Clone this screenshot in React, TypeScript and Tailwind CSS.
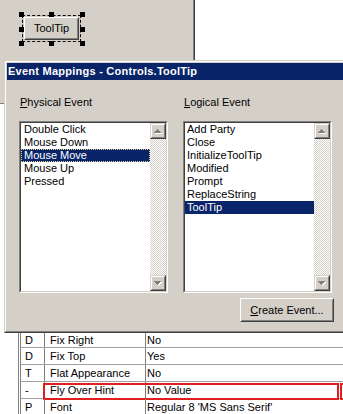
import React from "react";

function Tri({ dir }: { dir: "up" | "down" }) {
  const d =
    dir === "up"
      ? "M3 0H4V1H5V2H6V3H7V4H0V3H1V2H2V1H3Z"
      : "M0 0H7V1H6V2H5V3H4V4H3V3H2V2H1V1H0Z";
  return (
    <svg width="8" height="5" viewBox="0 0 8 5" className="block">
      <path d={d} transform="translate(1 1)" fill="#ffffff" />
      <path d={d} fill="#808080" />
    </svg>
  );
}

function ScrollBtn({ dir }: { dir: "up" | "down" }) {
  return (
    <div className="w-[16px] h-[16px] shrink-0 border border-t-[#d4d0c8] border-l-[#d4d0c8] border-r-[#404040] border-b-[#404040] bg-[#d4d0c8]">
      <div className="w-full h-full border border-t-white border-l-white border-r-[#808080] border-b-[#808080] flex items-center justify-center">
        <Tri dir={dir} />
      </div>
    </div>
  );
}

function ListBox({
  items,
  selected,
  focus,
  pad,
}: {
  items: string[];
  selected: number;
  focus?: boolean;
  pad: string;
}) {
  return (
    <div className="h-[172px] w-[149px] border border-t-[#808080] border-l-[#808080] border-r-white border-b-white">
      <div className="h-full border border-t-[#404040] border-l-[#404040] border-r-[#d4d0c8] border-b-[#d4d0c8] bg-white flex">
        <div className="flex-1 flex flex-col">
          {items.map((it, i) => (
            <div
              key={it}
              className={
                "h-[13px] leading-[13px] whitespace-nowrap " +
                pad +
                (i === selected ? " bg-[#0a246a] text-white" : " text-black") +
                (i === selected && focus
                  ? " outline-1 outline-dotted outline-[#e8d890] -outline-offset-1"
                  : "")
              }
            >
              {it}
            </div>
          ))}
        </div>
        <div className="w-[16px] flex flex-col">
          <ScrollBtn dir="up" />
          <div className="flex-1 bg-[image:repeating-conic-gradient(#d4d0c8_0_25%,#ffffff_0_50%)] bg-[length:2px_2px]" />
          <ScrollBtn dir="down" />
        </div>
      </div>
    </div>
  );
}

function Dialog() {
  return (
    <div className="w-[352px] shrink-0 h-[273px] border border-t-[#d4d0c8] border-l-[#d4d0c8] border-b-[#404040] border-r-[#404040]">
      <div className="h-full border border-t-white border-l-white border-b-[#808080] border-r-[#808080] p-px flex flex-col">
        <div className="h-[17px] shrink-0 bg-[#0a246a] text-white font-bold tracking-[0.25px] flex items-center pl-[1px] whitespace-nowrap">
          Event Mappings - Controls.ToolTip
        </div>
        <div className="pl-[12px] pt-[16px]">
          <div className="flex gap-[15px]">
            <div className="w-[149px]">
              <div className="h-[13px] pl-[1px] whitespace-nowrap">
                <span className="underline">P</span>hysical Event
              </div>
              <div className="mt-[12px]">
                <ListBox
                  items={["Double Click", "Mouse Down", "Mouse Move", "Mouse Up", "Pressed"]}
                  selected={2}
                  focus
                  pad="pl-[3px]"
                />
              </div>
            </div>
            <div className="w-[149px]">
              <div className="h-[13px] pl-[1px] whitespace-nowrap">
                <span className="underline">L</span>ogical Event
              </div>
              <div className="mt-[12px]">
                <ListBox
                  items={[
                    "Add Party",
                    "Close",
                    "InitializeToolTip",
                    "Modified",
                    "Prompt",
                    "ReplaceString",
                    "ToolTip",
                  ]}
                  selected={6}
                  pad="pl-[2px]"
                />
              </div>
            </div>
          </div>
          <div className="mt-[5px] ml-[221px] w-[94px] h-[24px] border border-t-white border-l-white border-r-[#404040] border-b-[#404040]">
            <div className="w-full h-full border border-t-[#d4d0c8] border-l-[#d4d0c8] border-r-[#808080] border-b-[#808080] flex items-center justify-center whitespace-nowrap">
              <span className="underline">C</span>reate Event...
            </div>
          </div>
        </div>
      </div>
    </div>
  );
}

const rows = [
  { k: "D", n: "Fix Right", v: "No" },
  { k: "D", n: "Fix Top", v: "Yes" },
  { k: "T", n: "Flat Appearance", v: "No" },
  { k: "-", n: "Fly Over Hint", v: "No Value" },
  { k: "P", n: "Font", v: "Regular 8 'MS Sans Serif'" },
];

function Grid() {
  return (
    <div className="flex-1 bg-white flex overflow-hidden">
      <div className="w-[18px] shrink-0" />
      <div className="w-px bg-[#808080]" />
      <div className="w-px bg-white" />
      <div className="w-px bg-[#808080]" />
      <div className="flex-1 flex flex-col">
        {rows.map((r, i) => (
          <div
            key={r.n}
            className={
              "relative flex shrink-0 border-b border-[#a0a0a0] whitespace-nowrap " +
              (i === 0 ? "h-[15px]" : "h-[17px]")
            }
          >
            <div
              className={
                "w-[24px] shrink-0 border-r border-[#808080] pl-[4px] " +
                (i === 0 ? "pt-px" : "flex items-center")
              }
            >
              {r.k}
            </div>
            <div
              className={
                "w-[101px] shrink-0 border-r border-[#808080] pl-[5px] " +
                (i === 0 ? "pt-px" : "flex items-center")
              }
            >
              {r.n}
            </div>
            <div className={"flex-1 pl-[1px] " + (i === 0 ? "pt-px" : "flex items-center")}>
              {r.v}
            </div>
            {i === 3 && (
              <>
                <div className="absolute left-[22px] top-px w-[296px] h-[17px] border-2 border-[#e02020]" />
                <div className="absolute left-[319px] top-px w-[20px] h-[17px] border-2 border-[#e02020]" />
              </>
            )}
          </div>
        ))}
      </div>
    </div>
  );
}

function Handle({ x, y }: { x: string; y: string }) {
  return <div className={"absolute w-[5px] h-[5px] bg-black " + x + " " + y} />;
}

export default function App() {
  return (
    <div className="w-[343px] h-[414px] overflow-hidden bg-[#d4d0c8] flex flex-col font-['Liberation_Sans',Arial,sans-serif] text-[11px] leading-[13px] text-black">
      <div className="h-[60px] shrink-0 flex">
        <div className="w-[193px] shrink-0 relative">
          <div className="absolute left-[22px] top-[15px] w-[59px] h-[27px] border border-dashed border-black" />
          <div className="absolute left-[24px] top-[17px] w-[55px] h-[23px] border border-t-white border-l-white border-r-[#404040] border-b-[#404040]">
            <div className="w-full h-full border border-t-[#d4d0c8] border-l-[#d4d0c8] border-r-[#808080] border-b-[#808080] flex items-center justify-center">
              ToolTip
            </div>
          </div>
          <Handle x="left-[19px]" y="top-[12px]" />
          <Handle x="left-[49px]" y="top-[12px]" />
          <Handle x="left-[80px]" y="top-[12px]" />
          <Handle x="left-[19px]" y="top-[27px]" />
          <Handle x="left-[80px]" y="top-[27px]" />
          <Handle x="left-[19px]" y="top-[41px]" />
          <Handle x="left-[49px]" y="top-[41px]" />
          <Handle x="left-[80px]" y="top-[41px]" />
        </div>
        <div className="w-px bg-[#808080]" />
        <div className="w-px bg-[#404040]" />
        <div className="flex-1 bg-white" />
      </div>
      <div className="h-[273px] shrink-0 flex">
        <div className="w-[4px] shrink-0 flex flex-col">
          <div className="h-[43px]" />
          <div className="h-px bg-[#808080]" />
          <div className="flex-1 bg-white" />
        </div>
        <Dialog />
      </div>
      <Grid />
    </div>
  );
}
